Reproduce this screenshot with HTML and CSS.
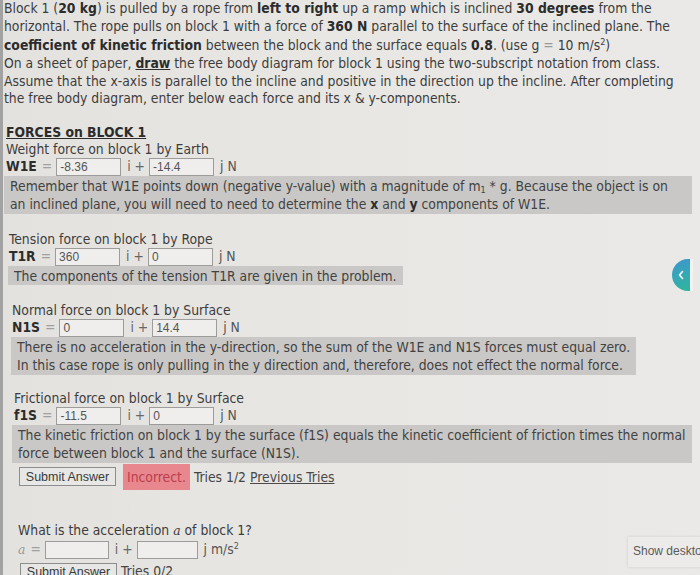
FILE: index.html
```html
<!DOCTYPE html>
<html>
<head>
<meta charset="utf-8">
<title>Block 1 forces</title>
<link rel="stylesheet" href="styles.css">
</head>
<body>
<div class="page">
  <div class="edge"></div>
  <main class="content">
    <p class="intro">
      <span class="line">Block 1 (<b>20 kg</b>) is pulled by a rope from <b>left to right</b> up a ramp which is inclined <b>30 degrees</b> from the</span>
      <span class="line">horizontal. The rope pulls on block 1 with a force of <b>360 N</b> parallel to the surface of the inclined plane. The</span>
      <span class="line tall"><b>coefficient of kinetic friction</b> between the block and the surface equals <b>0.8</b>. (use g <span class="lite">=</span> 10 m/s<sup>2</sup>)</span>
      <span class="line">On a sheet of paper, <b><u>draw</u></b> the free body diagram for block 1 using the two-subscript notation from class.</span>
      <span class="line">Assume that the x-axis is parallel to the incline and positive in the direction up the incline. After completing</span>
      <span class="line">the free body diagram, enter below each force and its x &amp; y-components.</span>
    </p>

    <h3 class="title">FORCES on BLOCK 1</h3>

    <section class="force f1">
      <div class="label">Weight force on block 1 by Earth</div>
      <div class="row"><b class="name">W1E</b><span class="eq">=</span><span class="box">-8.36</span><span class="op">i +</span><span class="box">-14.4</span><span class="unit">j N</span></div>
      <div class="hint wide"><span class="line">Remember that W1E points down (negative y-value) with a magnitude of m<sub>1</sub> * g. Because the object is on</span><span class="line">an inclined plane, you will need to need to determine the <b>x</b> and <b>y</b> components of W1E.</span></div>
    </section>

    <section class="force f2">
      <div class="label">Tension force on block 1 by Rope</div>
      <div class="row"><b class="name">T1R</b><span class="eq">=</span><span class="box">360</span><span class="op">i +</span><span class="box">0</span><span class="unit">j N</span></div>
      <div class="hint fit"><span class="line">The components of the tension T1R are given in the problem.</span></div>
    </section>

    <section class="force f3">
      <div class="label">Normal force on block 1 by Surface</div>
      <div class="row"><b class="name">N1S</b><span class="eq">=</span><span class="box">0</span><span class="op">i +</span><span class="box">14.4</span><span class="unit">j N</span></div>
      <div class="hint fit"><span class="line">There is no acceleration in the y-direction, so the sum of the W1E and N1S forces must equal zero.</span><span class="line">In this case rope is only pulling in the y direction and, therefore, does not effect the normal force.</span></div>
    </section>

    <section class="force f4">
      <div class="label">Frictional force on block 1 by Surface</div>
      <div class="row"><b class="name">f1S</b><span class="eq">=</span><span class="box">-11.5</span><span class="op">i +</span><span class="box">0</span><span class="unit">j N</span></div>
      <div class="hint wide"><span class="line">The kinetic friction on block 1 by the surface (f1S) equals the kinetic coefficient of friction times the normal</span><span class="line">force between block 1 and the surface (N1S).</span></div>
      <div class="submit-row"><button class="btn">Submit Answer</button><span class="bad">Incorrect.</span><span class="tries">Tries 1/2 <u>Previous Tries</u></span></div>
    </section>

    <section class="question">
      <div class="label">What is the acceleration <i class="var">a</i> of block 1?</div>
      <div class="row"><i class="var lite">a</i><span class="eq">=</span><span class="box"></span><span class="op">i +</span><span class="box"></span><span class="unit">j m/s<sup>2</sup></span></div>
      <div class="submit-row low"><button class="btn">Submit Answer</button><span class="tries">Tries 0/2</span></div>
    </section>
  </main>

  <div class="tab"><svg width="8" height="10" viewBox="0 0 8 10"><path d="M5.5 1.5 L2.5 5 L5.5 8.5" fill="none" stroke="#ffffff" stroke-width="1.6" stroke-linecap="round" stroke-linejoin="round"/></svg></div>
  <div class="desk">Show desktop</div>
</div>
</body>
</html>
```

FILE: styles.css
```css
html, body {
  margin: 0;
  padding: 0;
}

body {
  background: #e6e5e2;
  font-family: "DejaVu Sans Condensed", "DejaVu Sans", sans-serif;
  font-stretch: condensed;
  font-size: 13.8px;
  color: #3d3d3d;
}

.page {
  position: relative;
  width: 700px;
  height: 575px;
  overflow: hidden;
  display: flex;
  background: linear-gradient(90deg, #e4e2df 0%, #e8e7e4 50%, #eae9e7 100%);
}

.edge {
  width: 3px;
  flex: none;
  background: #a2a2a2;
}

.content {
  flex: 1;
  padding: 0 10px 0 1px;
}

b { color: #2c2c2c; }

.line {
  display: block;
  white-space: nowrap;
}

.intro {
  margin: 0;
  line-height: 17.5px;
}

.intro .tall { line-height: 20px; }

sup {
  font-size: 9px;
  line-height: 0;
  vertical-align: 5px;
}

sub {
  font-size: 9px;
  line-height: 0;
  vertical-align: -2px;
}

.lite { color: #9a9a9a; }

.title {
  margin: 16px 0 0 2px;
  font-size: 13.8px;
  font-weight: bold;
  line-height: 17px;
  text-decoration: underline;
  color: #2c2c2c;
}

.force { margin-top: 17px; }
.force.f1 { margin: 0 0 0 2px; }
.force.f2 { margin-left: 5px; }
.force.f3 { margin-left: 8px; }
.force.f4 { margin-left: 10px; margin-top: 15px; }

.label { line-height: 17px; }

.row {
  display: flex;
  align-items: center;
  height: 18px;
  line-height: 17px;
}

.name { color: #2c2c2c; }

.eq {
  color: #a0a0a0;
  margin: 0 4px 0 5px;
}

.box {
  box-sizing: border-box;
  width: 65px;
  height: 18px;
  border: 1px solid #9c9c9a;
  background: #efeeec;
  font-family: "Liberation Sans", Arial, sans-serif;
  font-size: 12px;
  line-height: 16px;
  padding-left: 3px;
  color: #555555;
}

.op {
  color: #666;
  margin: 0 4px 0 6px;
}

.unit {
  color: #555;
  margin-left: 6px;
}

.hint {
  background: #c9c8c6;
  line-height: 18px;
  padding: 1px 6px 1px 6px;
  color: #424242;
}

.hint.wide { margin-left: -2px; }
.hint.fit { width: fit-content; margin-left: -1px; }
.f2 .hint { padding: 1px 6px 0 6px; }

.submit-row {
  display: flex;
  align-items: center;
  height: 28px;
  margin-left: 5px;
}

.btn {
  box-sizing: border-box;
  height: 19px;
  width: 97px;
  padding: 0;
  border: 1px solid #8d8d8d;
  background: #e7e7e6;
  font-family: "Liberation Sans", Arial, sans-serif;
  font-size: 12.5px;
  color: #3a3a3a;
}

.bad {
  margin-left: 7px;
  background: #e9878f;
  color: #b8404d;
  height: 26px;
  line-height: 26px;
  padding: 0 4px;
}

.tries {
  margin-left: 4px;
  color: #444;
}

.tries u { color: #4a4a4a; }

.question {
  margin: 31px 0 0 14px;
}

.question .row { margin-top: 2px; }

.question .box { width: 64px; }

.question .row .box + .op + .box { width: 61px; }

.var {
  font-family: "DejaVu Serif", serif;
  font-style: italic;
}

.submit-row.low {
  margin: 4px 0 0 2px;
  height: 20px;
  align-items: flex-start;
}

.tab {
  position: absolute;
  left: 672px;
  top: 259px;
  width: 18px;
  height: 32px;
  border-radius: 16px 0 0 16px;
  background: linear-gradient(160deg, #3d94cf 0%, #35a9b4 55%, #2fb59a 100%);
  display: flex;
  align-items: center;
  justify-content: center;
  box-shadow: 3px 0 0 #f2f2f0;
}

.desk {
  position: absolute;
  left: 628px;
  top: 537px;
  width: 90px;
  height: 30px;
  box-sizing: border-box;
  padding: 7px 0 0 5px;
  background: #ecebe9;
  box-shadow: 0 0 3px rgba(0, 0, 0, 0.12);
  font-family: "Liberation Sans", Arial, sans-serif;
  font-size: 12px;
  color: #5a5a5a;
  white-space: nowrap;
}
```
